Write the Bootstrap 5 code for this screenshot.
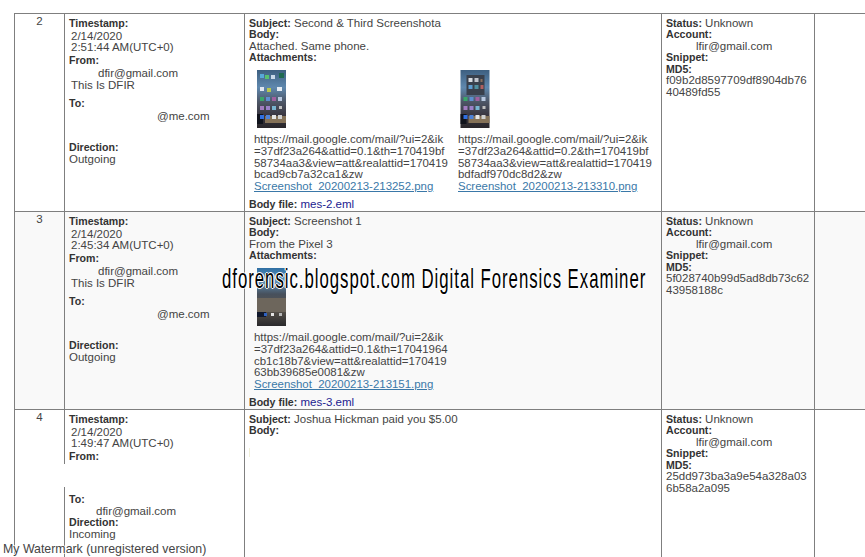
<!DOCTYPE html>
<html lang="en"><head><meta charset="utf-8"><title>Messages</title>
<link href="https://cdn.jsdelivr.net/npm/bootstrap@5.3.0/dist/css/bootstrap.min.css" rel="stylesheet">
<style>
html,body{height:557px;overflow:hidden;background:#fff}
body{font-family:"Liberation Sans",Arial,sans-serif;font-size:11.5px;line-height:11.5px;color:#444;position:relative}
.sheet{padding:13px 0 0 14px;width:880px}
.msg-table{table-layout:fixed;width:860px;margin:0;border-color:#7f7f7f;color:#444;font-size:11.5px}
.msg-table td{padding:3.6px 4px 0;height:198px;vertical-align:top}
.msg-table td.num{text-align:center;padding-top:2px}
.rowalt{--bs-table-bg:#f9f9f9}
.c1{width:50px}.c2{width:180px}.c3{width:417px}.c4{width:153px}
b{font-weight:bold;color:#333;font-size:10.6px}
.ind{padding-left:2px}
.t13{margin-top:1.5px}
.to-gap{margin-top:6.9px}
.dir-gap{margin-top:19.7px}
.em1{padding-left:29px}
.me{padding-left:88px}
.to4{padding-left:27px}
.spacer4{height:31.5px}
.atts{display:flex;margin-top:6.6px}
.att{width:204px;padding-left:5px}
.thumb{display:block;margin:0 0 6px 3px;width:29px;height:58px}
.thumb2{margin-left:2px;width:30px}
.url{line-height:11.7px;font-size:11.45px}
.fname{color:#3a78a8;text-decoration:underline;display:block;margin-top:.2px;font-size:11.45px}
.bodyfile{margin-top:6.4px}
.bodyfile span{color:#1b1b90}
.fin{padding-left:30px}
.faint{width:1px;height:9px;background:#f0efd8;margin:11px 0 0 0}
.patch{position:absolute;left:63px;top:464px;width:3px;height:23px;background:#fff}
.wm{position:absolute;left:222px;top:264px;font-family:"Liberation Sans Narrow","Liberation Sans",sans-serif;font-size:28px;line-height:30px;letter-spacing:1.6px;color:#000;white-space:nowrap;transform-origin:0 0;transform:scaleX(.6);text-shadow:2px 0 0 #fff,-2px 0 0 #fff,0 1px 0 #fff,0 -1px 0 #fff}
.wm2{position:absolute;left:3px;top:542px;font-size:12.35px;line-height:14px;color:#444;white-space:nowrap;text-shadow:1px 0 0 #fff,-1px 0 0 #fff,0 1px 0 #fff,0 -1px 0 #fff}
</style></head>
<body>
<svg width="0" height="0" class="position-absolute">
<defs>
<linearGradient id="sky" x1="0" y1="0" x2="0" y2="1"><stop offset="0" stop-color="#3d5f80"/><stop offset=".3" stop-color="#5f88ae"/><stop offset=".55" stop-color="#4d5666"/><stop offset=".78" stop-color="#3a3640"/><stop offset="1" stop-color="#29262a"/></linearGradient>
<linearGradient id="sky3" x1="0" y1="0" x2="0" y2="1"><stop offset="0" stop-color="#2f6fa3"/><stop offset=".22" stop-color="#5f93ba"/><stop offset=".45" stop-color="#47505c"/><stop offset=".7" stop-color="#5c564e"/><stop offset="1" stop-color="#2a2a2c"/></linearGradient>
<g id="ph">
<rect width="29" height="58" fill="url(#sky)"/>
<rect y="44" width="6" height="10" fill="#10131c"/>
<rect x="8" y="46" width="21" height="7" fill="#857258"/>
<rect x="3" y="27" width="4" height="4" fill="#3aa66a"/><rect x="9" y="27" width="4" height="4" fill="#5d8fd0"/><rect x="15" y="27" width="4" height="4" fill="#a060a0"/><rect x="21" y="27" width="4" height="4" fill="#b8c8e0"/>
<rect x="3" y="36" width="4" height="4" fill="#a27cc0"/><rect x="9" y="36" width="4" height="4" fill="#9a80c8"/><rect x="15" y="36" width="4" height="4" fill="#78b4d0"/><rect x="22" y="36" width="3" height="3" fill="#c0c0c0"/>
<rect x="3" y="45" width="4" height="4" fill="#2f6fe0"/><rect x="9" y="45" width="4" height="4" fill="#4d82d8"/><rect x="15" y="45" width="4" height="4" fill="#e6e6e6"/><rect x="21" y="45" width="4" height="4" fill="#d0d0d0"/>
</g>
</defs></svg>
<div class="sheet">
<table class="table table-bordered msg-table">
<colgroup><col class="c1"><col class="c2"><col class="c3"><col class="c4"><col></colgroup>
<tbody>
<tr>
<td class="num">2</td>
<td>
<div><b>Timestamp:</b></div>
<div class="ind t13">2/14/2020</div>
<div class="ind">2:51:44 AM(UTC+0)</div>
<div class="t13"><b>From:</b></div>
<div class="em1 t13">dfir@gmail.com</div>
<div class="ind">This Is DFIR</div>
<div class="to-gap"><b>To:</b></div>
<div class="me t13">@me.com</div>
<div class="dir-gap"><b>Direction:</b></div>
<div>Outgoing</div>
</td>
<td>
<div><b>Subject:</b> Second &amp; Third Screenshota</div>
<div><b>Body:</b></div>
<div>Attached. Same phone.</div>
<div><b>Attachments:</b></div>
<div class="atts">
<div class="att">
<svg class="thumb" viewBox="0 0 29 58"><use href="#ph"/><rect x="3" y="4" width="4" height="4" fill="#58a8d8"/><rect x="8" y="5" width="4" height="4" fill="#58c070"/><rect x="14" y="5" width="4" height="4" fill="#c8d8e8"/><rect x="22" y="3" width="5" height="5" fill="#1f6a50"/><rect x="3" y="17" width="4" height="4" fill="#dfe6f0"/><rect x="10" y="18" width="4" height="4" fill="#b8c850"/><rect x="20" y="17" width="5" height="4" fill="#e4ecf4"/></svg>
<div class="url">https://mail.google.com/mail/?ui=2&amp;ik<br>=37df23a264&amp;attid=0.1&amp;th=170419bf<br>58734aa3&amp;view=att&amp;realattid=170419<br>bcad9cb7a32ca1&amp;zw</div>
<a class="fname" href="#">Screenshot_20200213-213252.png</a>
</div>
<div class="att">
<svg class="thumb thumb2" viewBox="0 0 29 58"><use href="#ph"/><rect x="6" y="5" width="18" height="20" fill="#39404c"/><rect x="8" y="8" width="4" height="4" fill="#d8dce2"/><rect x="14" y="8" width="4" height="4" fill="#c0c4cc"/><rect x="20" y="9" width="2" height="3" fill="#8a7060"/><rect x="8" y="15" width="4" height="4" fill="#5d9bd0"/><rect x="14" y="15" width="4" height="4" fill="#5090a0"/><rect x="20" y="15" width="3" height="4" fill="#b06060"/></svg>
<div class="url">https://mail.google.com/mail/?ui=2&amp;ik<br>=37df23a264&amp;attid=0.2&amp;th=170419bf<br>58734aa3&amp;view=att&amp;realattid=170419<br>bdfadf970dc8d2&amp;zw</div>
<a class="fname" href="#">Screenshot_20200213-213310.png</a>
</div>
</div>
<div class="bodyfile"><b>Body file:</b> <span>mes-2.eml</span></div>
</td>
<td>
<div><b>Status:</b> Unknown</div>
<div><b>Account:</b></div>
<div class="fin">lfir@gmail.com</div>
<div><b>Snippet:</b></div>
<div><b>MD5:</b></div>
<div>f09b2d8597709df8904db76<br>40489fd55</div>
</td>
<td></td>
</tr>
<tr class="rowalt">
<td class="num">3</td>
<td>
<div><b>Timestamp:</b></div>
<div class="ind t13">2/14/2020</div>
<div class="ind">2:45:34 AM(UTC+0)</div>
<div class="t13"><b>From:</b></div>
<div class="em1 t13">dfir@gmail.com</div>
<div class="ind">This Is DFIR</div>
<div class="to-gap"><b>To:</b></div>
<div class="me t13">@me.com</div>
<div class="dir-gap"><b>Direction:</b></div>
<div>Outgoing</div>
</td>
<td>
<div><b>Subject:</b> Screenshot 1</div>
<div><b>Body:</b></div>
<div>From the Pixel 3</div>
<div><b>Attachments:</b></div>
<div class="atts">
<div class="att">
<svg class="thumb" viewBox="0 0 29 58"><rect width="29" height="58" fill="url(#sky3)"/><rect x="0" y="30" width="29" height="14" fill="#6d665c"/><rect x="0" y="44" width="9" height="5" fill="#10182c"/><rect x="7" y="45" width="3" height="3" fill="#2f62c0"/><rect x="14" y="45" width="3" height="3" fill="#e4e4e4"/><rect x="22" y="45" width="3" height="3" fill="#b8b8b8"/></svg>
<div class="url">https://mail.google.com/mail/?ui=2&amp;ik<br>=37df23a264&amp;attid=0.1&amp;th=17041964<br>cb1c18b7&amp;view=att&amp;realattid=170419<br>63bb39685e0081&amp;zw</div>
<a class="fname" href="#">Screenshot_20200213-213151.png</a>
</div>
</div>
<div class="bodyfile"><b>Body file:</b> <span>mes-3.eml</span></div>
</td>
<td>
<div><b>Status:</b> Unknown</div>
<div><b>Account:</b></div>
<div class="fin">lfir@gmail.com</div>
<div><b>Snippet:</b></div>
<div><b>MD5:</b></div>
<div>5f028740b99d5ad8db73c62<br>43958188c</div>
</td>
<td></td>
</tr>
<tr>
<td class="num">4</td>
<td>
<div><b>Timestamp:</b></div>
<div class="ind t13">2/14/2020</div>
<div class="ind">1:49:47 AM(UTC+0)</div>
<div class="t13"><b>From:</b></div>
<div class="spacer4"></div>
<div><b>To:</b></div>
<div class="to4">dfir@gmail.com</div>
<div><b>Direction:</b></div>
<div>Incoming</div>
</td>
<td>
<div><b>Subject:</b> Joshua Hickman paid you $5.00</div>
<div><b>Body:</b></div>
<div class="faint"></div>
</td>
<td>
<div><b>Status:</b> Unknown</div>
<div><b>Account:</b></div>
<div class="fin">lfir@gmail.com</div>
<div><b>Snippet:</b></div>
<div><b>MD5:</b></div>
<div>25dd973ba3a9e54a328a03<br>6b58a2a095</div>
</td>
<td></td>
</tr>
</tbody>
</table>
</div>
<div class="patch"></div>
<div class="wm">dforensic.blogspot.com Digital Forensics Examiner</div>
<div class="wm2">My Watermark (unregistered version)</div>
<script src="https://cdn.jsdelivr.net/npm/bootstrap@5.3.0/dist/js/bootstrap.bundle.min.js"></script>
</body></html>
